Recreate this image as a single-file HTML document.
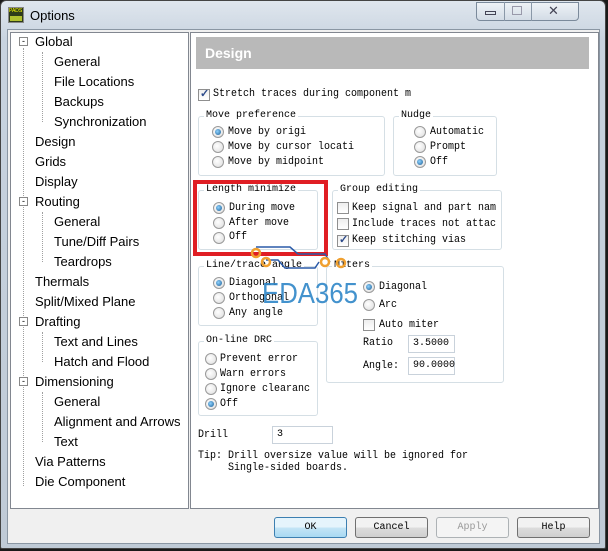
<!DOCTYPE html>
<html><head><meta charset="utf-8"><style>
*{margin:0;padding:0;box-sizing:border-box}
body{width:608px;height:551px;overflow:hidden;background:#1a1a1a;font-family:"Liberation Sans",sans-serif;position:relative}
.abs{position:absolute}
.win{left:0;top:0;width:606px;height:549px;background:linear-gradient(#dfe6ee,#c8d3df 40px,#bfcad6);border:1px solid #444;border-radius:6px 6px 2px 2px}
.client{left:7px;top:29px;width:593px;height:515px;background:#f0f0f0;border:1px solid #8a96a3}
.panel{background:#fff;border:1px solid #828790}
.t{position:absolute;font-size:13px;color:#000;white-space:nowrap;line-height:16px}
.m{position:absolute;font-family:"Liberation Mono",monospace;font-size:10px;white-space:nowrap;line-height:12px;color:#000;transform:scaleY(1.12);transform-origin:0 50%}
.gb{position:absolute;border:1px solid #d5dfe5;border-radius:3px}
.gb>span{position:absolute;top:-7px;left:5px;background:#fff;padding:0 2px;font-family:"Liberation Mono",monospace;font-size:10px;line-height:12px}
.r{position:absolute;width:12px;height:12px;border-radius:50%;border:1px solid #9a9a9a;background:radial-gradient(circle at 40% 40%,#fff,#dcdcdc)}
.r.on::after{content:"";position:absolute;left:2px;top:2px;width:6px;height:6px;border-radius:50%;background:radial-gradient(circle at 40% 40%,#8fd3ff,#1a5b93)}
.c{position:absolute;width:12px;height:12px;border:1px solid #8f8f8f;background:linear-gradient(#eee,#fff)}
.c.on::after{content:"✓";position:absolute;left:1px;top:-3px;font-size:11px;color:#2c4a8a;font-weight:bold}
.inp{position:absolute;border:1px solid #c9d2db;background:#fff;font-family:"Liberation Mono",monospace;font-size:10px;padding:2px 4px;line-height:12px}
.btn{position:absolute;top:517px;height:21px;border:1px solid #707070;border-radius:3px;background:linear-gradient(#f2f2f2 50%,#dddddd 50%,#cfcfcf);font-family:"Liberation Mono",monospace;font-size:10px;text-align:center;line-height:19px}
.dot{position:absolute;border-left:1px dotted #a0a0a0}
</style></head><body>
<div class="abs win"></div>
<div class="abs" style="left:8px;top:7px;width:16px;height:16px;background:#2e3b1a;border:1px solid #888"><div style="position:absolute;left:1px;top:8px;width:12px;height:5px;background:#b0c030"></div><div style="position:absolute;left:0;top:0;font-size:5px;color:#ff0;line-height:6px">PADS</div></div>
<div class="t" style="left:30px;top:8px;font-size:13px">Options</div>
<div class="abs" style="left:476px;top:2px;width:103px;height:19px;border:1px solid #7b8a9b;border-radius:0 0 4px 4px;background:linear-gradient(#eef2f6,#d3dce6);"></div>
<div class="abs" style="left:504px;top:2px;width:1px;height:19px;background:#8a98a8"></div>
<div class="abs" style="left:531px;top:2px;width:1px;height:19px;background:#8a98a8"></div>
<div class="abs" style="left:485px;top:11px;width:11px;height:4px;border:1px solid #445"></div>
<div class="abs" style="left:512px;top:6px;width:10px;height:9px;border:1px solid #99a"></div>
<div class="t" style="left:548px;top:3px;font-size:13px;color:#445">✕</div>
<div class="abs client"></div>
<div class="abs panel" style="left:10px;top:32px;width:179px;height:477px"></div>
<div class="abs panel" style="left:190px;top:32px;width:409px;height:477px"></div>
<div class="dot" style="left:23px;top:48px;height:438px"></div>
<div class="dot" style="left:42px;top:52px;height:70px"></div>
<div class="dot" style="left:42px;top:212px;height:50px"></div>
<div class="dot" style="left:42px;top:332px;height:30px"></div>
<div class="dot" style="left:42px;top:392px;height:50px"></div>
<div class="abs" style="left:19px;top:37px;width:9px;height:9px;border:1px solid #888;background:#fff;font-size:9px;line-height:6px;text-align:center">-</div>
<div class="abs" style="left:19px;top:197px;width:9px;height:9px;border:1px solid #888;background:#fff;font-size:9px;line-height:6px;text-align:center">-</div>
<div class="abs" style="left:19px;top:317px;width:9px;height:9px;border:1px solid #888;background:#fff;font-size:9px;line-height:6px;text-align:center">-</div>
<div class="abs" style="left:19px;top:377px;width:9px;height:9px;border:1px solid #888;background:#fff;font-size:9px;line-height:6px;text-align:center">-</div>
<div class="t" style="left:35px;top:34px">Global</div>
<div class="t" style="left:54px;top:54px">General</div>
<div class="t" style="left:54px;top:74px">File Locations</div>
<div class="t" style="left:54px;top:94px">Backups</div>
<div class="t" style="left:54px;top:114px">Synchronization</div>
<div class="t" style="left:35px;top:134px">Design</div>
<div class="t" style="left:35px;top:154px">Grids</div>
<div class="t" style="left:35px;top:174px">Display</div>
<div class="t" style="left:35px;top:194px">Routing</div>
<div class="t" style="left:54px;top:214px">General</div>
<div class="t" style="left:54px;top:234px">Tune/Diff Pairs</div>
<div class="t" style="left:54px;top:254px">Teardrops</div>
<div class="t" style="left:35px;top:274px">Thermals</div>
<div class="t" style="left:35px;top:294px">Split/Mixed Plane</div>
<div class="t" style="left:35px;top:314px">Drafting</div>
<div class="t" style="left:54px;top:334px">Text and Lines</div>
<div class="t" style="left:54px;top:354px">Hatch and Flood</div>
<div class="t" style="left:35px;top:374px">Dimensioning</div>
<div class="t" style="left:54px;top:394px">General</div>
<div class="t" style="left:54px;top:414px">Alignment and Arrows</div>
<div class="t" style="left:54px;top:434px">Text</div>
<div class="t" style="left:35px;top:454px">Via Patterns</div>
<div class="t" style="left:35px;top:474px">Die Component</div>
<div class="abs" style="left:196px;top:37px;width:393px;height:32px;background:#b9b9b9"></div>
<div class="t" style="left:205px;top:45px;color:#fff;font-weight:bold;font-size:14px">Design</div>
<div class="c on" style="left:198px;top:89px"></div>
<div class="m" style="left:213px;top:89px">Stretch traces during component m</div>

<div class="gb" style="left:198px;top:116px;width:187px;height:60px"><span>Move preference</span></div>
<div class="r on" style="left:212px;top:126px"></div><div class="m" style="left:228px;top:127px">Move by origi</div>
<div class="r" style="left:212px;top:141px"></div><div class="m" style="left:228px;top:142px">Move by cursor locati</div>
<div class="r" style="left:212px;top:156px"></div><div class="m" style="left:228px;top:157px">Move by midpoint</div>

<div class="gb" style="left:393px;top:116px;width:104px;height:60px"><span>Nudge</span></div>
<div class="r" style="left:414px;top:126px"></div><div class="m" style="left:430px;top:127px">Automatic</div>
<div class="r" style="left:414px;top:141px"></div><div class="m" style="left:430px;top:142px">Prompt</div>
<div class="r on" style="left:414px;top:156px"></div><div class="m" style="left:430px;top:157px">Off</div>

<div class="gb" style="left:198px;top:190px;width:120px;height:60px"><span>Length minimize</span></div>
<div class="r on" style="left:213px;top:202px"></div><div class="m" style="left:229px;top:203px">During move</div>
<div class="r" style="left:213px;top:217px"></div><div class="m" style="left:229px;top:218px">After move</div>
<div class="r" style="left:213px;top:232px"></div><div class="m" style="left:229px;top:232px">Off</div>
<div class="abs" style="left:193px;top:180px;width:135px;height:76px;border:4px solid #e01e24"></div>

<div class="gb" style="left:332px;top:190px;width:170px;height:60px"><span>Group editing</span></div>
<div class="c" style="left:337px;top:202px"></div><div class="m" style="left:352px;top:203px">Keep signal and part nam</div>
<div class="c" style="left:337px;top:218px"></div><div class="m" style="left:352px;top:219px">Include traces not attac</div>
<div class="c on" style="left:337px;top:235px"></div><div class="m" style="left:352px;top:235px">Keep stitching vias</div>

<div class="gb" style="left:198px;top:266px;width:120px;height:60px"><span>Line/trace angle</span></div>
<div class="r on" style="left:213px;top:277px"></div><div class="m" style="left:229px;top:278px">Diagonal</div>
<div class="r" style="left:213px;top:292px"></div><div class="m" style="left:229px;top:293px">Orthogonal</div>
<div class="r" style="left:213px;top:307px"></div><div class="m" style="left:229px;top:308px">Any angle</div>

<div class="gb" style="left:326px;top:266px;width:178px;height:117px"><span>Miters</span></div>
<div class="r on" style="left:363px;top:281px"></div><div class="m" style="left:379px;top:282px">Diagonal</div>
<div class="r" style="left:363px;top:299px"></div><div class="m" style="left:379px;top:300px">Arc</div>
<div class="c" style="left:363px;top:319px"></div><div class="m" style="left:379px;top:320px">Auto miter</div>
<div class="m" style="left:363px;top:338px">Ratio</div>
<div class="inp" style="left:408px;top:335px;width:47px;height:18px">3.5000</div>
<div class="m" style="left:363px;top:361px">Angle:</div>
<div class="inp" style="left:408px;top:357px;width:47px;height:18px">90.0000</div>

<div class="gb" style="left:198px;top:341px;width:120px;height:75px"><span>On-line DRC</span></div>
<div class="r" style="left:205px;top:353px"></div><div class="m" style="left:220px;top:354px">Prevent error</div>
<div class="r" style="left:205px;top:368px"></div><div class="m" style="left:220px;top:369px">Warn errors</div>
<div class="r" style="left:205px;top:383px"></div><div class="m" style="left:220px;top:384px">Ignore clearanc</div>
<div class="r on" style="left:205px;top:398px"></div><div class="m" style="left:220px;top:399px">Off</div>

<div class="m" style="left:198px;top:430px">Drill</div>
<div class="inp" style="left:272px;top:426px;width:61px;height:18px">3</div>
<div class="m" style="left:198px;top:451px">Tip: Drill oversize value will be ignored for</div>
<div class="m" style="left:228px;top:463px">Single-sided boards.</div>

<svg class="abs" style="left:240px;top:240px" width="130" height="75">
<path d="M16 7 L50 7 L58 14 L85 14 L90 22" stroke="#2a5aa8" stroke-width="1.5" fill="none"/>
<path d="M26 20 L38 20 L45 28 L75 28 L79 22" stroke="#2a5aa8" stroke-width="1.5" fill="none"/>
<circle cx="16" cy="13" r="4" fill="none" stroke="#f0a030" stroke-width="2.5"/>
<circle cx="26" cy="22" r="4" fill="none" stroke="#f0a030" stroke-width="2.5"/>
<circle cx="85" cy="22" r="4" fill="none" stroke="#f0a030" stroke-width="2.5"/>
<circle cx="101" cy="23" r="4" fill="none" stroke="#f0a030" stroke-width="2.5"/>
<text x="22" y="63" font-family="Liberation Sans" font-size="29" textLength="96" lengthAdjust="spacingAndGlyphs" fill="#2f86c8" fill-opacity="0.9">EDA365</text>
</svg>

<div class="btn" style="left:274px;width:73px;border-color:#3c7fb1;background:linear-gradient(#e5f4fc 50%,#c4e5f6 50%,#a9d9f2)">OK</div>
<div class="btn" style="left:355px;width:73px">Cancel</div>
<div class="btn" style="left:436px;width:73px;color:#999;border-color:#adb2b5;background:#f4f4f4">Apply</div>
<div class="btn" style="left:517px;width:73px">Help</div>
</body></html>
